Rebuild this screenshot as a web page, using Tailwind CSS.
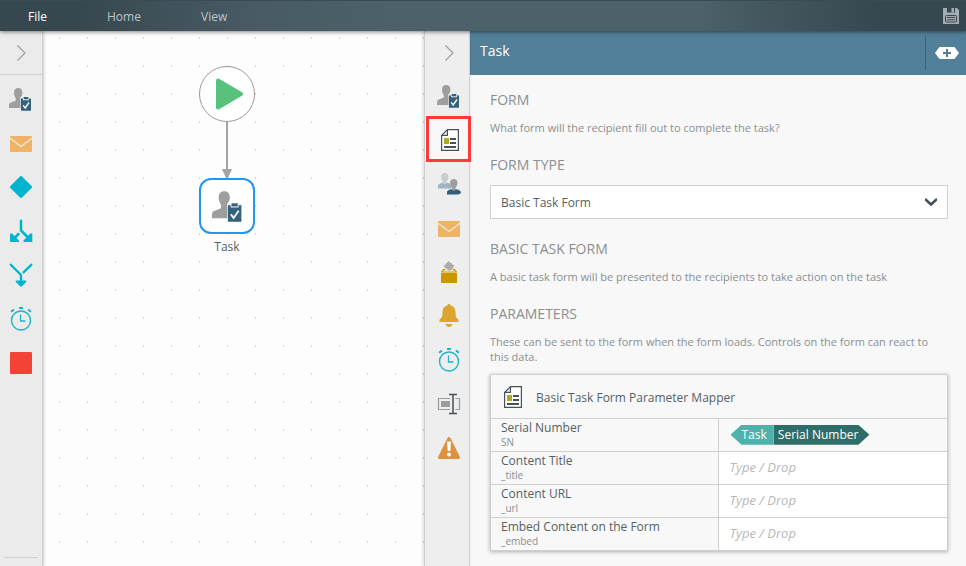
<!DOCTYPE html>
<html lang="en">
<head>
  <meta charset="utf-8">
  <meta name="viewport" content="width=device-width, initial-scale=1">
  <title>Workflow Designer</title>
  <script src="https://cdn.jsdelivr.net/npm/@tailwindcss/browser@4"></script>
</head>
<body class="h-screen flex flex-col overflow-hidden bg-[#f8f8f8] font-['Open_Sans',sans-serif] text-[12px] text-[#555f63]">

<!-- Icons -->
<svg class="hidden">
  <symbol id="chevron" viewBox="0 0 24 24"><path d="M8.500 4.500L16 12L8.500 19.500" fill="none" stroke="#a2a2a2" stroke-width="1.300"/></symbol>
  <symbol id="task" viewBox="0 0 24 24">
    <path d="M9.200 1c2.800 0 4.200 1.900 4.200 4.700 0 2-.9 3.700-1.900 4.700v2.400l1 .6v7.700H0v-3c0-1.500 1-2.300 2.400-2.800l3.500-1.200c.7-.3.900-.7.900-1.300v-1.400C5.700 9.400 5 7.700 5 5.700 5 2.900 6.400 1 9.200 1z" fill="#9d9f9f"/>
    <path d="M11.500 10h11v14.500h-11z" fill="#ececec"/>
    <path d="M12 11.500h2v1.700h6v-1.700h2v12.300H12z" fill="#34617c"/>
    <path d="M14.700 10h4.600v2.300h-4.600z" fill="#34617c"/>
    <path d="M14.200 18.300l2 2.700 3.800-5.500" fill="none" stroke="#fff" stroke-width="1.400"/>
  </symbol>
  <symbol id="mail" viewBox="0 0 24 24">
    <rect x="1" y="5" width="22" height="16" rx="1" fill="#efb366"/>
    <path d="M1 7.300l11 8.200 11-8.200" fill="none" stroke="#f4eadb" stroke-width="1.300"/>
  </symbol>
  <symbol id="diamond" viewBox="0 0 24 24"><path d="M12 2L22 12 12 22 2 12z" fill="#00b4cd" stroke="#00b4cd" stroke-width="2.200" stroke-linejoin="round"/></symbol>
  <symbol id="split" viewBox="0 0 24 24">
    <path d="M12 1.800v9.700l7 7M9.500 15l-4.500 4.500" fill="none" stroke="#00b4cd" stroke-width="2.500" stroke-linecap="round"/>
    <path d="M1 14.500L3 14.500 10 21.500V23H1zM23.300 14.500h-2L14.500 21.500V23h8.800z" fill="#00b4cd"/>
  </symbol>
  <symbol id="merge" viewBox="0 0 24 24">
    <path d="M1.800 1.800L12 12v6M22.300 1.800l-7.800 7.500" fill="none" stroke="#00b4cd" stroke-width="2.300" stroke-linecap="round"/>
    <path d="M6.800 17.500h10.400v1.500L12.800 23.500h-1.600L6.800 19z" fill="#00b4cd"/>
  </symbol>
  <symbol id="clock" viewBox="0 0 24 24">
    <circle cx="12" cy="13.500" r="9.500" fill="none" stroke="#1bb4cc" stroke-width="1.400"/>
    <path d="M11.500 7.500v6.500h5" fill="none" stroke="#1bb4cc" stroke-width="1.300"/>
    <path d="M10 1h4M2 4.800l3-2.200M22 4.800l-3-2.200" fill="none" stroke="#1bb4cc" stroke-width="2"/>
  </symbol>
  <symbol id="stop" viewBox="0 0 24 24"><rect x="1" y="1" width="22" height="22" rx="1" fill="#f44336"/></symbol>
  <symbol id="form" viewBox="0 0 24 24">
    <path d="M10.500 1.600H21.400V22.400H4.600V7.500z" fill="#fff" stroke="#455358" stroke-width="1.200"/>
    <path d="M10.400 1.600v5.800H4.600" fill="none" stroke="#455358" stroke-width="1.200"/>
    <path d="M7 10h5v6H7z" fill="#a8ab24"/>
    <path d="M13 11h6M13 15h6M7 19h12" stroke="#455358" stroke-width="2"/>
  </symbol>
  <symbol id="people" viewBox="0 0 24 24">
    <path d="M1 16.500v-2.700c0-1.600 2-2.300 4.300-3h5c2.300.7 4 1.400 4 3v2.700z" fill="#9db5c2"/>
    <path d="M7.800 1c2.400 0 3.700 1.500 3.700 3.700 0 2.200-1.100 4-2 4.900v2c-1 1-2.500 1-3.500 0v-2c-.9-.9-1.800-2.700-1.800-4.900C4.200 2.500 5.400 1 7.800 1z" fill="#cbcccc"/>
    <path d="M10 22.500v-2.200c0-1.500 1.500-2.200 4-3h5.500c2.500.8 4.300 1.500 4.300 3 0 1.500-1.500 2.200-3 2.200z" fill="#2f617c"/>
    <path d="M16.800 7c2.400 0 3.700 1.500 3.700 3.800 0 2.200-1.300 4.200-2 4.900v2c-1 1.500-2.500 1.500-3.500 0v-2c-.7-.7-1.900-2.700-1.900-4.900C13.100 8.500 14.400 7 16.800 7z" fill="#9d9f9f"/>
  </symbol>
  <symbol id="ballot" viewBox="0 0 24 24">
    <path d="M11.500 1L17.500 6 14 10.500h-2.500L6.500 6.500z" fill="#abadad"/>
    <path d="M4 13h16v10H4z" fill="#c99700"/>
    <path d="M4.700 12L6.500 9.700h1.800M19.300 12L17.500 9.700h-1.800" fill="none" stroke="#c99700" stroke-width="1.300"/>
    <path d="M4.500 11.500h15v1h-15z" fill="#c99700"/>
  </symbol>
  <symbol id="bell" viewBox="0 0 24 24">
    <path d="M12 0c1 0 1.600.6 1.600 1.500 3.400.7 4.900 3.300 4.900 6.500 0 4.500.8 6.500 3 7.500v2.500h-19v-2.500c2.200-1 3-3 3-7.500 0-3.200 1.500-5.800 4.900-6.500C10.400.6 11 0 12 0z" fill="#dba52f"/>
    <path d="M8.500 20h7c-.5 2-1.800 3-3.500 3s-3-1-3.500-3z" fill="#dba52f"/>
  </symbol>
  <symbol id="textbox" viewBox="0 0 24 24">
    <path d="M13 6.500H1.500v11H13M18.500 6.500h4v11h-4" fill="none" stroke="#9b9d9d" stroke-width="1.200"/>
    <path d="M4 9h9v6H4z" fill="#9b9d9d"/>
    <path d="M12 2.600h8M12 21.400h8M16 2.600v18.800" stroke="#455358" stroke-width="1.500"/>
  </symbol>
  <symbol id="warning" viewBox="0 0 24 24">
    <path d="M12 2.500L21.500 21.500H2.500z" fill="#dd923f" stroke="#dd923f" stroke-width="3" stroke-linejoin="round"/>
    <path d="M10 5.500h4l-.7 9.500h-2.600z" fill="#fff"/><circle cx="12" cy="18.500" r="2" fill="#fff"/>
  </symbol>
</svg>

<!-- Menu bar -->
<header class="relative z-20 flex h-[31px] shrink-0 items-center justify-between border-t border-[#3b4b55] bg-[linear-gradient(90deg,#36474f_8%,#485b64_26%,#4c6169_42%,#4c6169_72%,#36474f_91%)] shadow-[0_1px_4px_rgba(0,0,0,0.5)]">
  <nav class="flex pt-0.5 text-[#bcc5c8]">
    <a href="#" class="w-[79px] pl-7 font-medium text-white">File</a>
    <a href="#" class="w-[94px] pl-7">Home</a>
    <a href="#" class="pl-7">View</a>
  </nav>
  <button aria-label="Save" class="mr-[7px]">
    <svg class="w-4 h-4" viewBox="0 0 16 16">
      <path d="M0 0h4v4.500h8V0h2l2 2v14H0z" fill="#a3adb1"/>
      <path d="M6 0h5v4.500H8.500V0z" fill="#a3adb1"/>
      <rect x="2.500" y="7.500" width="11" height="6.500" rx="1" fill="none" stroke="#36474f"/>
      <path d="M4 9.500h8M4 11.800h8" stroke="#36474f"/>
    </svg>
  </button>
</header>

<main class="flex min-h-0 flex-1">
  <!-- Toolbox -->
  <aside class="relative z-10 flex w-[43px] shrink-0 flex-col border-r border-[#cfcfcf] bg-[#ebebeb] shadow-[1px_0_3px_rgba(0,0,0,0.2)]">
    <button aria-label="Expand toolbox" class="flex h-11 shrink-0 items-center justify-center border-b border-[#cfcfcf]"><svg class="w-6 h-6"><use href="#chevron"/></svg></button>
    <div class="flex flex-1 flex-col pt-0.5">
      <button aria-label="Task" class="flex h-11 items-center justify-center"><svg class="w-6 h-6"><use href="#task"/></svg></button>
      <button aria-label="Mail" class="flex h-11 items-center justify-center"><svg class="w-6 h-6"><use href="#mail"/></svg></button>
      <button aria-label="Decision" class="flex h-11 items-center justify-center"><svg class="w-6 h-6"><use href="#diamond"/></svg></button>
      <button aria-label="Split" class="flex h-11 items-center justify-center"><svg class="w-6 h-6"><use href="#split"/></svg></button>
      <button aria-label="Merge" class="flex h-11 items-center justify-center"><svg class="w-6 h-6"><use href="#merge"/></svg></button>
      <button aria-label="Timer" class="flex h-11 items-center justify-center"><svg class="w-6 h-6"><use href="#clock"/></svg></button>
      <button aria-label="End" class="flex h-11 items-center justify-center"><svg class="w-6 h-6"><use href="#stop"/></svg></button>
    </div>
    <hr class="mx-1 mb-2 border-[#cfcfcf]">
  </aside>

  <!-- Canvas -->
  <section class="relative min-w-0 flex-1 bg-[#fdfdfd]">
    <svg class="absolute h-full w-full">
      <defs>
        <pattern id="dots" width="28" height="28" patternUnits="userSpaceOnUse"><rect x="16" y="6" width="1" height="2" fill="#d4d4d4"/></pattern>
      </defs>
      <rect width="100%" height="100%" fill="url(#dots)"/>
      <path d="M184 91v50" stroke="#a3a3a3" stroke-width="2"/>
      <path d="M179 138h10l-4 9h-2z" fill="#a3a3a3"/>
      <circle cx="184" cy="63" r="27.500" fill="#fff" stroke="#999"/>
      <path d="M175 49.500L198 63 175 76.500z" fill="#57c27c" stroke="#57c27c" stroke-width="4" stroke-linejoin="round"/>
    </svg>
    <div class="absolute left-[156px] top-[147px] flex w-14 flex-col items-center">
      <div class="flex h-14 w-14 items-center justify-center rounded-xl border-2 border-[#2196f3] bg-white pl-0.5"><svg class="w-8 h-8"><use href="#task"/></svg></div>
      <span class="mt-[5px] leading-4">Task</span>
    </div>
  </section>

  <!-- Configuration tabs -->
  <aside class="relative z-10 flex w-[46px] shrink-0 flex-col border-x border-[#cfcfcf] bg-[#eee] shadow-[-1px_0_3px_rgba(0,0,0,0.15)]">
    <button aria-label="Collapse panel" class="flex h-[43px] shrink-0 items-center justify-center pl-1"><svg class="w-6 h-6"><use href="#chevron"/></svg></button>
    <button aria-label="Task" class="flex h-11 items-center justify-center pl-1"><svg class="w-6 h-6"><use href="#task"/></svg></button>
    <button aria-label="Form" class="relative flex h-11 items-center justify-center bg-[#f8f8f8] pl-1">
      <svg class="w-6 h-6"><use href="#form"/></svg>
      <span class="absolute -top-0.5 bottom-0 left-px -right-0.5 border-3 border-[#fb3b3b]"></span>
    </button>
    <button aria-label="Recipients" class="flex h-11 items-center justify-center pl-1"><svg class="w-6 h-6"><use href="#people"/></svg></button>
    <button aria-label="Mail" class="flex h-11 items-center justify-center pl-1"><svg class="w-6 h-6"><use href="#mail"/></svg></button>
    <button aria-label="Outcomes" class="flex h-11 items-center justify-center pl-1"><svg class="w-6 h-6"><use href="#ballot"/></svg></button>
    <button aria-label="Reminders" class="flex h-11 items-center justify-center pl-1"><svg class="w-6 h-6"><use href="#bell"/></svg></button>
    <button aria-label="Deadline" class="flex h-11 items-center justify-center pl-1"><svg class="w-6 h-6"><use href="#clock"/></svg></button>
    <button aria-label="Labels" class="flex h-11 items-center justify-center pl-1"><svg class="w-6 h-6"><use href="#textbox"/></svg></button>
    <button aria-label="Exceptions" class="flex h-11 items-center justify-center pl-1"><svg class="w-6 h-6"><use href="#warning"/></svg></button>
  </aside>

  <!-- Properties panel -->
  <section class="w-[496px] shrink-0">
    <div class="flex h-11 items-center justify-between bg-[#528099] pl-2.5 text-white">
      <h1 class="pb-1 text-[14px] font-medium leading-5">Task</h1>
      <button aria-label="Context browser" class="flex h-[34px] w-[41px] items-center border-l border-[#38647c] pl-[9px]">
        <svg class="w-6 h-3" viewBox="0 0 24 12"><path d="M0 6L4.500 0h15L24 6l-4.500 6h-15z" fill="#fff"/><path d="M12 2v8M8 6h8" stroke="#4f7f99" stroke-width="2"/></svg>
      </button>
    </div>
    <div class="pl-5 pr-[18px] pt-[15px] text-[11px] leading-[15px] text-[#8a8f90]">
      <h2 class="text-[14px] leading-5">FORM</h2>
      <p class="mt-2.5">What form will the recipient fill out to complete the task?</p>

      <h2 class="mt-5 text-[14px] leading-5"><label for="formtype">FORM TYPE</label></h2>
      <div class="relative mt-2.5">
        <select id="formtype" class="block h-[34px] w-full appearance-none border border-[#cfcfcf] bg-white px-2.5 text-[12px] text-[#555f63]">
          <option>Basic Task Form</option>
        </select>
        <svg class="pointer-events-none absolute right-[11px] top-[11px] w-3 h-3" viewBox="0 0 12 12"><path d="M0 3l6 5.500L12 3" fill="none" stroke="#454f5c" stroke-width="2.400"/></svg>
      </div>

      <h2 class="mt-5 text-[14px] leading-5">BASIC TASK FORM</h2>
      <p class="mt-2.5">A basic task form will be presented to the recipients to take action on the task</p>

      <h2 class="mt-5 text-[14px] leading-5">PARAMETERS</h2>
      <p class="mt-2.5">These can be sent to the form when the form loads. Controls on the form can react to this data.</p>

      <div class="mt-2.5 border border-[#cfcfcf] shadow-[0_1px_4px_rgba(0,0,0,0.3)]">
        <div class="flex h-11 items-center border-b border-[#cfcfcf] pl-[9px] text-[12px] text-[#555f63]">
          <svg class="mr-3 w-6 h-6"><use href="#form"/></svg>
          <span class="pt-0.5">Basic Task Form Parameter Mapper</span>
        </div>
        <table class="w-full table-fixed text-left">
          <tbody class="divide-y divide-[#cfcfcf]">
            <tr class="h-8">
              <th class="w-[227px] border-r border-[#cfcfcf] pl-2.5 font-normal" id="sn"><div class="text-[12px] text-[#555f63]">Serial Number</div><div class="text-[10px] leading-3.5">SN</div></th>
              <td class="pl-3">
                <div class="flex h-5 text-[12px] font-medium leading-5 text-white">
                  <span class="bg-[#4db3aa] pl-[11px] pr-[7px] [clip-path:polygon(11px_0,100%_0,100%_100%,11px_100%,0_50%)]">Task</span>
                  <span class="bg-[#2f6e68] pl-1 pr-[11px] [clip-path:polygon(0_0,calc(100%-11px)_0,100%_50%,calc(100%-11px)_100%,0_100%)]">Serial Number</span>
                </div>
              </td>
            </tr>
            <tr class="h-[33px]">
              <th class="border-r border-[#cfcfcf] pl-2.5 font-normal" id="title"><div class="text-[12px] text-[#555f63]">Content Title</div><div class="text-[10px] leading-3.5">_title</div></th>
              <td class="bg-white"><input aria-labelledby="title" placeholder="Type / Drop" class="block h-8 w-full px-[11px] pb-0.5 text-[13px] italic placeholder:text-[#b8b8b8]"></td>
            </tr>
            <tr class="h-[33px]">
              <th class="border-r border-[#cfcfcf] pl-2.5 font-normal" id="url"><div class="text-[12px] text-[#555f63]">Content URL</div><div class="text-[10px] leading-3.5">_url</div></th>
              <td class="bg-white"><input aria-labelledby="url" placeholder="Type / Drop" class="block h-8 w-full px-[11px] pb-0.5 text-[13px] italic placeholder:text-[#b8b8b8]"></td>
            </tr>
            <tr class="h-[33px]">
              <th class="border-r border-[#cfcfcf] pl-2.5 font-normal" id="embed"><div class="text-[12px] text-[#555f63]">Embed Content on the Form</div><div class="text-[10px] leading-3.5">_embed</div></th>
              <td class="bg-white"><input aria-labelledby="embed" placeholder="Type / Drop" class="block h-8 w-full px-[11px] pb-0.5 text-[13px] italic placeholder:text-[#b8b8b8]"></td>
            </tr>
          </tbody>
        </table>
      </div>
    </div>
  </section>
</main>
</body>
</html>
